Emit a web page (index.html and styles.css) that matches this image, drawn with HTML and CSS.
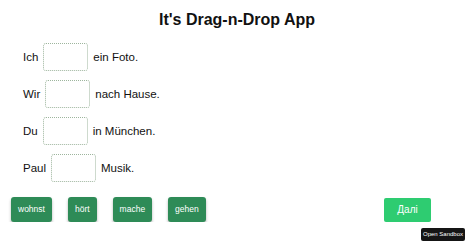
FILE: index.html
```html
<!DOCTYPE html>
<html lang="de">
<head>
<meta charset="utf-8">
<title>It's Drag-n-Drop App</title>
<link rel="stylesheet" href="styles.css">
</head>
<body>
  <h1 class="title">It's Drag-n-Drop App</h1>
  <div class="sentences">
    <div class="row"><span>Ich</span><span class="slot"></span><span>ein Foto.</span></div>
    <div class="row"><span>Wir</span><span class="slot"></span><span>nach Hause.</span></div>
    <div class="row"><span>Du</span><span class="slot"></span><span>in München.</span></div>
    <div class="row"><span>Paul</span><span class="slot"></span><span>Musik.</span></div>
  </div>
  <div class="actions">
    <div class="words">
      <div class="word">wohnst</div>
      <div class="word">hört</div>
      <div class="word">mache</div>
      <div class="word">gehen</div>
    </div>
    <button class="next">Далі</button>
  </div>
  <a class="sandbox">Open Sandbox</a>
</body>
</html>
```

FILE: styles.css
```css
* { box-sizing: border-box; }
html, body {
  margin: 0;
  padding: 0;
  background: #fff;
  font-family: "Liberation Sans", Arial, sans-serif;
  color: #111;
}
.title {
  margin: 10px 0 0;
  font-size: 16px;
  line-height: 20px;
  font-weight: bold;
  text-align: center;
}
.sentences {
  display: flex;
  flex-direction: column;
  gap: 9px;
  margin-top: 13px;
  padding-left: 23px;
}
.row {
  display: flex;
  align-items: center;
  gap: 5px;
  font-size: 11.5px;
  height: 28px;
}
.slot {
  display: block;
  width: 45px;
  height: 28px;
  border: 1px dotted #9db59d;
  border-radius: 3px;
}
.actions {
  display: flex;
  align-items: center;
  margin-top: 15px;
  padding-left: 11px;
  padding-right: 43px;
}
.words {
  display: flex;
  gap: 16px;
}
.word {
  height: 25px;
  line-height: 25px;
  padding: 0 7px;
  background: #2e8b57;
  color: #fff;
  font-size: 8.5px;
  border-radius: 3px;
  box-shadow: 0 2px 3px rgba(0, 0, 0, 0.3);
}
.next {
  margin-left: auto;
  width: 47px;
  height: 24px;
  border: none;
  border-radius: 2px;
  background: #2ecc71;
  color: #fff;
  font-family: "Liberation Sans", Arial, sans-serif;
  font-size: 10px;
  padding: 0;
}
.sandbox {
  position: fixed;
  right: 9px;
  bottom: 7px;
  width: 44px;
  height: 13px;
  line-height: 13px;
  background: #151515;
  color: #fff;
  font-size: 6px;
  text-align: center;
  border-radius: 2px;
}
```
